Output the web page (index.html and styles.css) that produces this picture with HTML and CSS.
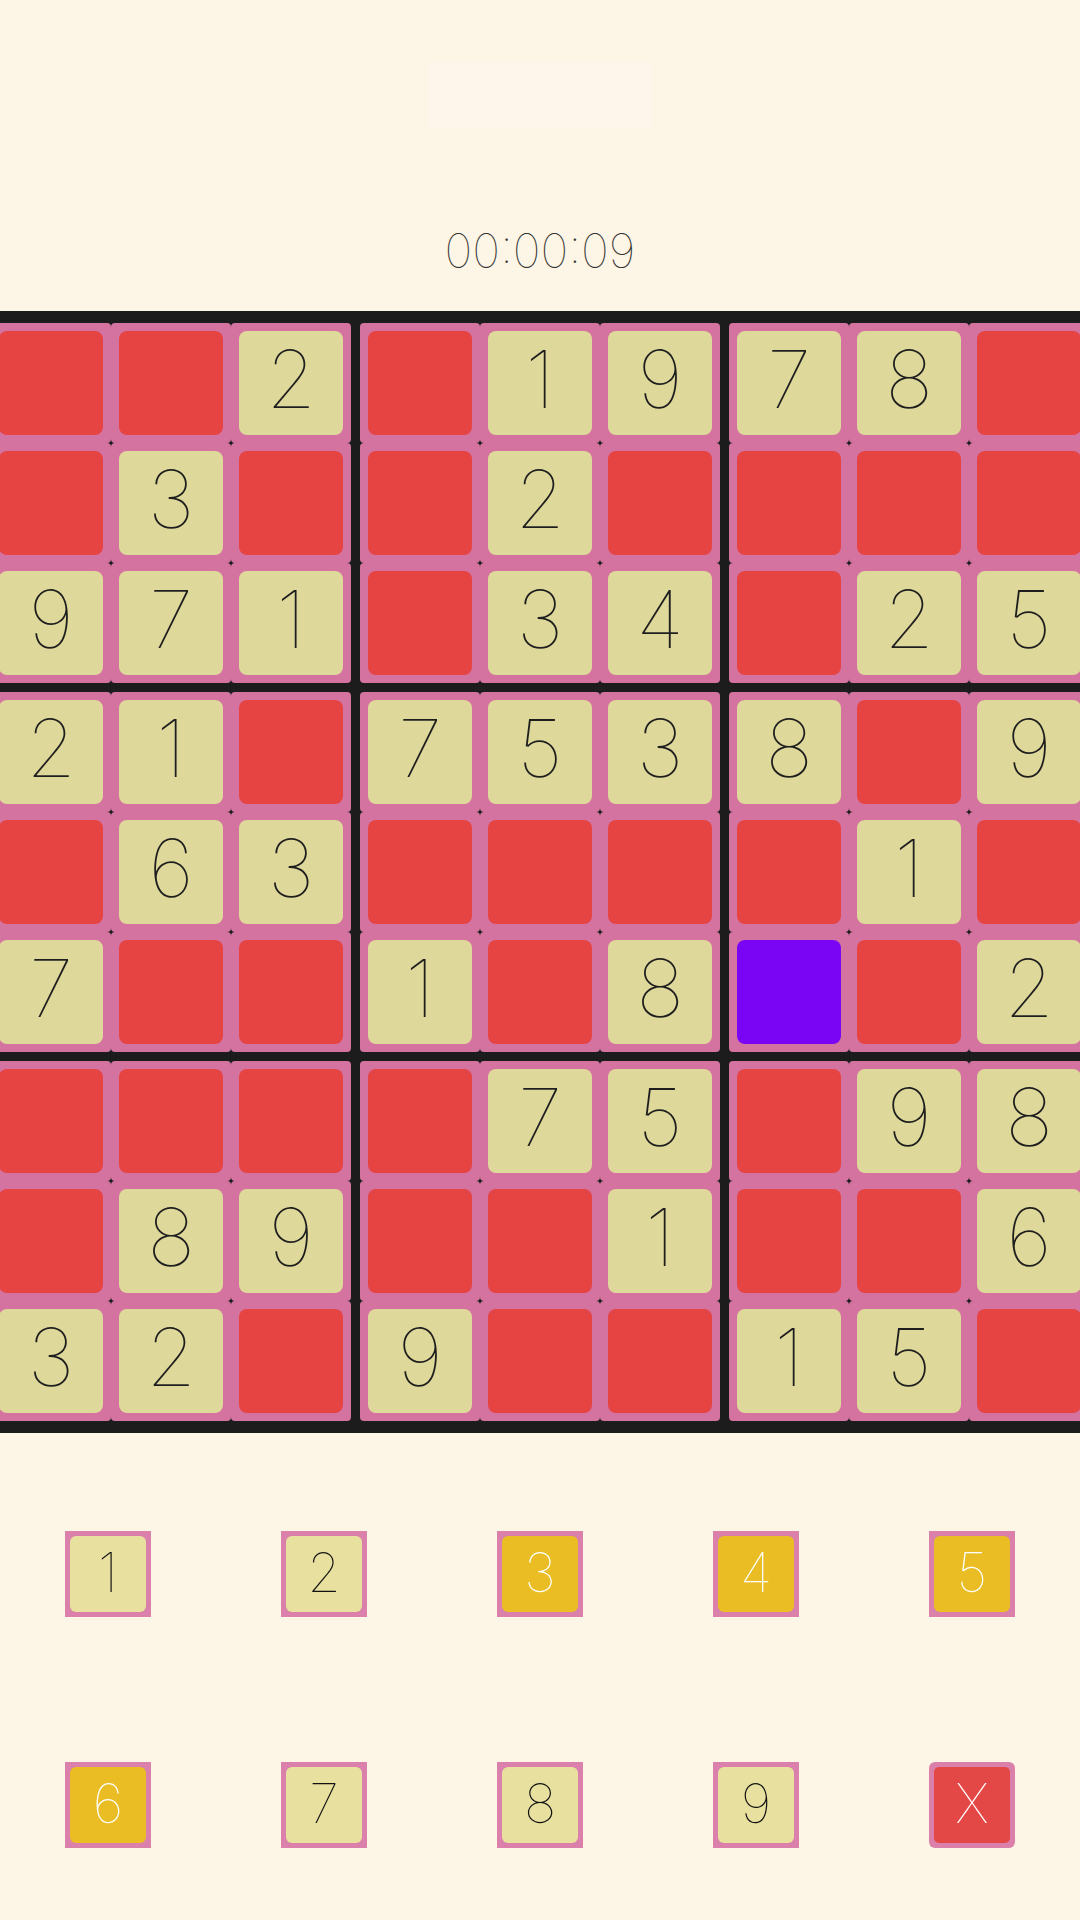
FILE: index.html
```html
<!DOCTYPE html>
<html>
<head>
<meta charset="utf-8">
<link rel="stylesheet" href="styles.css">
</head>
<body>
<div class="screen">
  <header class="top">
    <div class="title-pill"></div>
    <div class="timer">00:00:09</div>
  </header>

  <div class="board-wrap">
    <div class="board">
      <div class="box">
        <div class="cell"><div class="in empty"></div></div>
        <div class="cell"><div class="in empty"></div></div>
        <div class="cell"><div class="in given">2</div></div>
        <div class="cell"><div class="in empty"></div></div>
        <div class="cell"><div class="in given">3</div></div>
        <div class="cell"><div class="in empty"></div></div>
        <div class="cell"><div class="in given">9</div></div>
        <div class="cell"><div class="in given">7</div></div>
        <div class="cell"><div class="in given">1</div></div>
      </div>
      <div class="box">
        <div class="cell"><div class="in empty"></div></div>
        <div class="cell"><div class="in given">1</div></div>
        <div class="cell"><div class="in given">9</div></div>
        <div class="cell"><div class="in empty"></div></div>
        <div class="cell"><div class="in given">2</div></div>
        <div class="cell"><div class="in empty"></div></div>
        <div class="cell"><div class="in empty"></div></div>
        <div class="cell"><div class="in given">3</div></div>
        <div class="cell"><div class="in given">4</div></div>
      </div>
      <div class="box">
        <div class="cell"><div class="in given">7</div></div>
        <div class="cell"><div class="in given">8</div></div>
        <div class="cell"><div class="in empty"></div></div>
        <div class="cell"><div class="in empty"></div></div>
        <div class="cell"><div class="in empty"></div></div>
        <div class="cell"><div class="in empty"></div></div>
        <div class="cell"><div class="in empty"></div></div>
        <div class="cell"><div class="in given">2</div></div>
        <div class="cell"><div class="in given">5</div></div>
      </div>
      <div class="box">
        <div class="cell"><div class="in given">2</div></div>
        <div class="cell"><div class="in given">1</div></div>
        <div class="cell"><div class="in empty"></div></div>
        <div class="cell"><div class="in empty"></div></div>
        <div class="cell"><div class="in given">6</div></div>
        <div class="cell"><div class="in given">3</div></div>
        <div class="cell"><div class="in given">7</div></div>
        <div class="cell"><div class="in empty"></div></div>
        <div class="cell"><div class="in empty"></div></div>
      </div>
      <div class="box">
        <div class="cell"><div class="in given">7</div></div>
        <div class="cell"><div class="in given">5</div></div>
        <div class="cell"><div class="in given">3</div></div>
        <div class="cell"><div class="in empty"></div></div>
        <div class="cell"><div class="in empty"></div></div>
        <div class="cell"><div class="in empty"></div></div>
        <div class="cell"><div class="in given">1</div></div>
        <div class="cell"><div class="in empty"></div></div>
        <div class="cell"><div class="in given">8</div></div>
      </div>
      <div class="box">
        <div class="cell"><div class="in given">8</div></div>
        <div class="cell"><div class="in empty"></div></div>
        <div class="cell"><div class="in given">9</div></div>
        <div class="cell"><div class="in empty"></div></div>
        <div class="cell"><div class="in given">1</div></div>
        <div class="cell"><div class="in empty"></div></div>
        <div class="cell"><div class="in selected"></div></div>
        <div class="cell"><div class="in empty"></div></div>
        <div class="cell"><div class="in given">2</div></div>
      </div>
      <div class="box">
        <div class="cell"><div class="in empty"></div></div>
        <div class="cell"><div class="in empty"></div></div>
        <div class="cell"><div class="in empty"></div></div>
        <div class="cell"><div class="in empty"></div></div>
        <div class="cell"><div class="in given">8</div></div>
        <div class="cell"><div class="in given">9</div></div>
        <div class="cell"><div class="in given">3</div></div>
        <div class="cell"><div class="in given">2</div></div>
        <div class="cell"><div class="in empty"></div></div>
      </div>
      <div class="box">
        <div class="cell"><div class="in empty"></div></div>
        <div class="cell"><div class="in given">7</div></div>
        <div class="cell"><div class="in given">5</div></div>
        <div class="cell"><div class="in empty"></div></div>
        <div class="cell"><div class="in empty"></div></div>
        <div class="cell"><div class="in given">1</div></div>
        <div class="cell"><div class="in given">9</div></div>
        <div class="cell"><div class="in empty"></div></div>
        <div class="cell"><div class="in empty"></div></div>
      </div>
      <div class="box">
        <div class="cell"><div class="in empty"></div></div>
        <div class="cell"><div class="in given">9</div></div>
        <div class="cell"><div class="in given">8</div></div>
        <div class="cell"><div class="in empty"></div></div>
        <div class="cell"><div class="in empty"></div></div>
        <div class="cell"><div class="in given">6</div></div>
        <div class="cell"><div class="in given">1</div></div>
        <div class="cell"><div class="in given">5</div></div>
        <div class="cell"><div class="in empty"></div></div>
      </div>
    </div>
  </div>

  <div class="pad">
    <div class="slot"><div class="key"><div class="face open">1</div></div></div>
    <div class="slot"><div class="key"><div class="face open">2</div></div></div>
    <div class="slot"><div class="key"><div class="face done">3</div></div></div>
    <div class="slot"><div class="key"><div class="face done">4</div></div></div>
    <div class="slot"><div class="key"><div class="face done">5</div></div></div>
    <div class="slot"><div class="key"><div class="face done">6</div></div></div>
    <div class="slot"><div class="key"><div class="face open">7</div></div></div>
    <div class="slot"><div class="key"><div class="face open">8</div></div></div>
    <div class="slot"><div class="key"><div class="face open">9</div></div></div>
    <div class="slot"><div class="key key-clear"><div class="face clear">X</div></div></div>
  </div>
</div>
</body>
</html>
```

FILE: styles.css
```css
html, body {
  margin: 0;
  padding: 0;
}
body {
  background: #fdf5e6;
  width: 1080px;
  height: 1920px;
  overflow: hidden;
  font-family: "Inter", "Roboto", "Liberation Sans", sans-serif;
}
.screen {
  width: 1080px;
  height: 1920px;
  display: flex;
  flex-direction: column;
  overflow: hidden;
}
.top {
  height: 311px;
  box-sizing: border-box;
  padding-top: 62px;
  display: flex;
  flex-direction: column;
  align-items: center;
}
.title-pill {
  width: 222px;
  height: 66px;
  background: #fff6eb;
  border-radius: 3px;
}
.timer {
  margin-top: 99px;
  font-size: 47px;
  line-height: 1;
  font-weight: 100;
  color: #333;
  letter-spacing: 0;
}
.board-wrap {
  display: flex;
  justify-content: center;
  width: 1080px;
  overflow: hidden;
}
.board {
  flex: none;
  width: 1122px;
  height: 1122px;
  box-sizing: border-box;
  background: #1c1c1c;
  padding: 12px;
  display: grid;
  grid-template-columns: repeat(3, 360px);
  grid-template-rows: repeat(3, 360px);
  gap: 9px;
}
.box {
  display: grid;
  grid-template-columns: repeat(3, 120px);
  grid-template-rows: repeat(3, 120px);
}
.cell {
  background: #d4739f;
  border-radius: 4px;
  padding: 8px;
  box-sizing: border-box;
  display: flex;
}
.in {
  flex: 1;
  border-radius: 8px;
  display: flex;
  align-items: center;
  justify-content: center;
  box-sizing: border-box;
  padding-bottom: 9px;
  font-size: 80px;
  line-height: 1;
  font-weight: 100;
  color: #1e1e1e;
}
.empty {
  background: #e64343;
}
.given {
  background: #dfd89b;
}
.selected {
  background: #7905f4;
}
.pad {
  padding-top: 98px;
  display: grid;
  grid-template-columns: repeat(5, 216px);
  row-gap: 145px;
}
.slot {
  display: flex;
  justify-content: center;
}
.key {
  width: 86px;
  height: 86px;
  box-sizing: border-box;
  padding: 5px;
  background: #db7fab;
  display: flex;
}
.key-clear {
  border-radius: 6px;
}
.face {
  flex: 1;
  border-radius: 6px;
  display: flex;
  align-items: center;
  justify-content: center;
  padding-bottom: 3px;
  box-sizing: border-box;
  font-size: 54px;
  line-height: 1;
  font-weight: 100;
}
.open {
  background: #e8e09f;
  color: #111;
}
.done {
  background: #e9bd23;
  color: #fff;
}
.clear {
  background: #e44846;
  color: #fff;
  border-radius: 5px;
}
```
